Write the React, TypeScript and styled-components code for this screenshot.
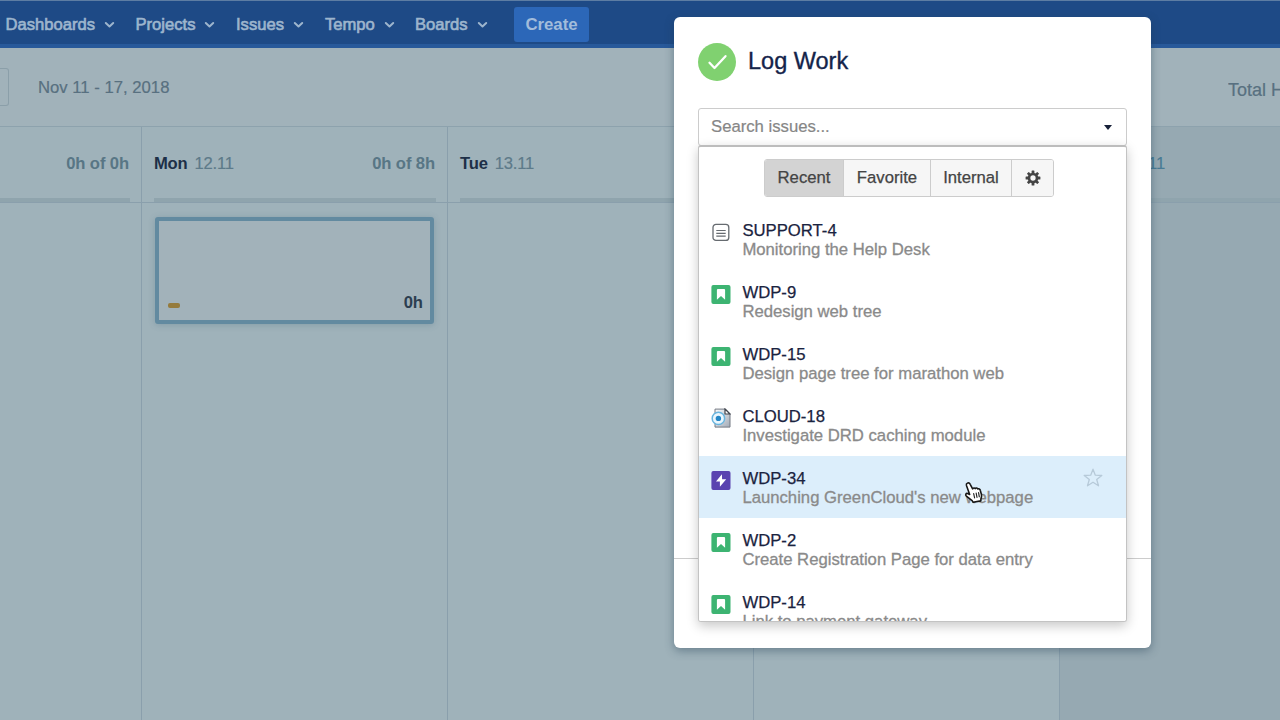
import React from "react";
import styled, { createGlobalStyle, css } from "styled-components";

const GlobalStyle = createGlobalStyle`
  * { box-sizing: border-box; }
  body { margin: 0; overflow: hidden; }
  body, button { font-family: "Liberation Sans", Arial, sans-serif; }
`;

const Page = styled.div`
  position: relative;
  width: 1280px;
  height: 720px;
  overflow: hidden;
  display: flex;
  flex-direction: column;
  background: #9fb2ba;
`;

const Nav = styled.nav`
  height: 48px;
  flex: none;
  display: flex;
  align-items: center;
  padding-left: 5.5px;
  background: #1e4a86;
  border-top: 1px solid #5d7da3;
  border-bottom: 4px solid #28599a;
`;

const NavItem = styled.a<{ $w: number }>`
  width: ${(p) => p.$w}px;
  flex: none;
  display: flex;
  align-items: center;
  gap: 9px;
  margin-top: 4px;
  font-size: 16.6px;
  color: #9db5cd;
  -webkit-text-stroke: 0.65px #9db5cd;
`;

const CreateButton = styled.button`
  width: 75px;
  height: 35px;
  margin-top: 4px;
  padding: 0;
  border: 0;
  border-radius: 3px;
  background: #2c67b8;
  color: #a2bcdb;
  font-size: 16.8px;
  font-weight: 700;
`;

const SubHeader = styled.header`
  height: 79px;
  flex: none;
  display: flex;
  align-items: center;
  background: #a1b2ba;
  border-bottom: 1px solid #8da2ad;
  color: #587080;
  font-size: 16.7px;
  -webkit-text-stroke: 0.2px #587080;
`;

const CutButton = styled.div`
  width: 9px;
  height: 38px;
  border: 1px solid #8b9fa9;
  border-left: 0;
  border-radius: 0 3px 3px 0;
`;

const DateRange = styled.div`
  margin: 1px 0 0 29px;
`;

const Total = styled.div`
  width: 52px;
  margin-left: auto;
  margin-top: 7px;
  overflow: hidden;
  white-space: nowrap;
  font-size: 18px;
`;

const Board = styled.main`
  flex: 1;
  display: flex;
`;

const Column = styled.section<{ $w: number; $today?: boolean }>`
  width: ${(p) => p.$w}px;
  flex: none;
  overflow: hidden;
  border-right: 1px solid #8a9fac;
  background: ${(p) => (p.$today ? "#96a9b2" : "#9fb2ba")};
`;

const DayHead = styled.div<{ $first?: boolean }>`
  height: 75px;
  margin: 0 11px 0 ${(p) => (p.$first ? 0 : 12)}px;
  padding: 2px 1px 0 0;
  display: flex;
  align-items: center;
  justify-content: ${(p) => (p.$first ? "flex-end" : "space-between")};
  border-bottom: 4px solid #8fa4ad;
  white-space: nowrap;
  font-size: 16.6px;
  letter-spacing: -0.1px;
`;

const HeadLine = styled.div`
  height: 1px;
  background: #8a9fac;
`;

const Day = styled.span<{ $today?: boolean }>`
  color: ${(p) => (p.$today ? "#497b95" : "#5d7a89")};
  letter-spacing: -0.2px;
  -webkit-text-stroke: 0.2px currentColor;
  b {
    margin-right: 7px;
    color: ${(p) => (p.$today ? "#497b95" : "#1d2f47")};
    -webkit-text-stroke: 0;
  }
`;

const Hours = styled.b`
  color: #587685;
`;

const DayCard = styled.div`
  height: 107px;
  margin: 14px 13px 0;
  padding: 0 7px 7px 9px;
  display: flex;
  align-items: flex-end;
  justify-content: space-between;
  background: #a2b2ba;
  border: 4px solid #628aa0;
  border-radius: 3px;
  box-shadow: 0 1px 6px rgba(70, 105, 125, 0.3);
  font-size: 16.6px;
  font-weight: 700;
  color: #2c3e50;
`;

const Dash = styled.i`
  width: 12px;
  height: 5px;
  margin-bottom: 5px;
  border-radius: 2px;
  background: #957b3d;
`;

const Modal = styled.div`
  position: absolute;
  left: 674px;
  top: 17px;
  width: 477px;
  height: 631px;
  display: flex;
  flex-direction: column;
  border-radius: 6px;
  background: #fff;
  box-shadow: 0 3px 10px rgba(30, 60, 80, 0.42);
`;

const ModalBody = styled.div`
  height: 542px;
  padding: 26px 24px 0;
  border-bottom: 1px solid #ccc;
`;

const TitleRow = styled.div`
  height: 38px;
  display: flex;
  align-items: center;
  gap: 12px;
`;

const Title = styled.h1`
  margin: -1px 0 0;
  font-size: 23.5px;
  font-weight: 400;
  color: #14244a;
  -webkit-text-stroke: 0.35px #14244a;
`;

const Picker = styled.div`
  position: relative;
  margin-top: 27px;
`;

const SearchField = styled.div`
  height: 38px;
  padding: 0 14px 0 12px;
  display: flex;
  align-items: center;
  justify-content: space-between;
  border: 1px solid #ccc;
  border-radius: 3px;
  background: #fff;
  font-size: 16.7px;
  color: #868686;
  -webkit-text-stroke: 0.2px #868686;
`;

const Caret = styled.i`
  margin-top: 1px;
  border: 4.5px solid transparent;
  border-top: 5px solid #172038;
  border-bottom: 0;
`;

const Dropdown = styled.div`
  position: absolute;
  left: 0;
  top: 37px;
  width: 429px;
  height: 477px;
  overflow: hidden;
  border: 1px solid #c3c3c3;
  border-top: 2px solid #bdbdbd;
  border-radius: 3px;
  background: #fff;
  box-shadow: 0 4px 12px rgba(0, 0, 0, 0.22);
`;

const Tabs = styled.div`
  width: 290px;
  height: 38px;
  margin: 12px 0 11px 65px;
  display: flex;
  border: 1px solid #ccc;
  border-radius: 3px;
  overflow: hidden;
`;

const Tab = styled.button<{ $w: number; $active?: boolean }>`
  width: ${(p) => p.$w}px;
  flex: none;
  display: flex;
  align-items: center;
  justify-content: center;
  padding: 0;
  border: 0;
  background: #f6f6f6;
  font-size: 16.7px;
  color: #444;
  -webkit-text-stroke: 0.25px #444;
  & + & {
    border-left: 1px solid #ccc;
  }
  ${(p) =>
    p.$active &&
    css`
      background: #d3d3d3;
    `}
`;

const IssueRow = styled.div<{ $hover?: boolean }>`
  height: 62px;
  padding: 13px 23px 0 12px;
  display: flex;
  background: ${(p) => (p.$hover ? "#dceefb" : "#fff")};
  svg {
    flex: none;
  }
  svg:first-child {
    margin-top: 1px;
  }
  svg:last-child {
    margin-top: -1px;
  }
`;

const IssueText = styled.div`
  flex: 1;
  margin-left: 11.4px;
  white-space: nowrap;
  font-size: 16.7px;
`;

const Key = styled.div`
  line-height: 20px;
  color: #1a2340;
  -webkit-text-stroke: 0.25px #1a2340;
`;

const Summary = styled.div`
  line-height: 18px;
  color: #8a8a8a;
  -webkit-text-stroke: 0.3px #8a8a8a;
`;

const Pointer = styled.svg`
  position: absolute;
  left: 964px;
  top: 481px;
`;

const Chevron = () => (
  <svg width="11" height="8" viewBox="0 0 11 8" fill="none">
    <path d="M1.8 2 5.5 5.5 9.2 2" stroke="#9db5cd" strokeWidth="2" strokeLinecap="round" strokeLinejoin="round" />
  </svg>
);

type Kind = "task" | "story" | "cloud" | "epic";

const IssueIcon = ({ kind }: { kind: Kind }) => {
  const common = { width: 20, height: 20, viewBox: "0 0 20 20" };
  if (kind === "task")
    return (
      <svg {...common} fill="none" stroke="#666b70">
        <rect x="2" y="2.4" width="15.8" height="16" rx="3" strokeWidth="1.3" />
        <path d="M5.3 8.5h9.4M5.3 11.3h9.4M5.3 14.1h9.4" strokeWidth="1.2" />
      </svg>
    );
  if (kind === "story")
    return (
      <svg {...common}>
        <rect x="0.4" y="0.9" width="19.1" height="19" rx="2" fill="#3db472" />
        <path d="M5.9 6a1 1 0 0 1 1-1h6.2a1 1 0 0 1 1 1v9.8L10 12l-4.1 3.8z" fill="#fff" />
      </svg>
    );
  if (kind === "epic")
    return (
      <svg {...common}>
        <rect x="0.4" y="0.9" width="19.1" height="19" rx="2" fill="#5a43b0" />
        <path d="M10.9 4.2 5 11.6h3.9v5.2l6.3-7.6h-4.1z" fill="#fff" />
      </svg>
    );
  return (
    <svg {...common}>
      <defs>
        <linearGradient id="sheet" x1="0" y1="0" x2="1" y2="1">
          <stop offset="0" stopColor="#fbfcfd" />
          <stop offset="1" stopColor="#a2aab6" />
        </linearGradient>
      </defs>
      <path d="M4 1.1h10.6L19 5.7v13.4H4z" fill="url(#sheet)" stroke="#747a84" strokeWidth="1" />
      <path d="M14 1v5h5z" fill="#fff" stroke="#3f434b" strokeWidth="1.2" />
      <circle cx="7.4" cy="10.4" r="6.2" fill="#eaf6fd" stroke="#69b5df" strokeWidth="1.5" />
      <circle cx="7.4" cy="10.4" r="2.7" fill="#2386c6" />
    </svg>
  );
};

const GearIcon = () => (
  <svg width="16" height="16" viewBox="-8 -8 16 16">
    <circle r="4" fill="none" stroke="#444" strokeWidth="2.7" />
    {[0, 45, 90, 135, 180, 225, 270, 315].map((a) => (
      <rect key={a} x="-1.4" y="-7.4" width="2.8" height="3" rx="0.5" fill="#444" transform={`rotate(${a})`} />
    ))}
  </svg>
);

const navItems: [string, number][] = [
  ["Dashboards", 130],
  ["Projects", 100.5],
  ["Issues", 89],
  ["Tempo", 90],
  ["Boards", 99],
];

const issues: [string, string, Kind][] = [
  ["SUPPORT-4", "Monitoring the Help Desk", "task"],
  ["WDP-9", "Redesign web tree", "story"],
  ["WDP-15", "Design page tree for marathon web", "story"],
  ["CLOUD-18", "Investigate DRD caching module", "cloud"],
  ["WDP-34", "Launching GreenCloud's new webpage", "epic"],
  ["WDP-2", "Create Registration Page for data entry", "story"],
  ["WDP-14", "Link to payment gateway", "story"],
];

export default function App() {
  return (
    <>
      <GlobalStyle />
      <Page>
        <Nav>
          {navItems.map(([label, w]) => (
            <NavItem key={label} $w={w}>
              {label}
              <Chevron />
            </NavItem>
          ))}
          <CreateButton>Create</CreateButton>
        </Nav>
        <SubHeader>
          <CutButton />
          <DateRange>Nov 11 - 17, 2018</DateRange>
          <Total>Total Hours</Total>
        </SubHeader>
        <Board>
          <Column $w={142}>
            <DayHead $first>
              <Hours>0h of 0h</Hours>
            </DayHead>
            <HeadLine />
          </Column>
          <Column $w={306}>
            <DayHead>
              <Day><b>Mon</b>12.11</Day>
              <Hours>0h of 8h</Hours>
            </DayHead>
            <HeadLine />
            <DayCard>
              <Dash />
              0h
            </DayCard>
          </Column>
          <Column $w={306}>
            <DayHead>
              <Day><b>Tue</b>13.11</Day>
            </DayHead>
            <HeadLine />
          </Column>
          <Column $w={306}>
            <DayHead />
            <HeadLine />
          </Column>
          <Column $w={306} $today>
            <DayHead>
              <Day $today><b>Today</b>15.11</Day>
            </DayHead>
            <HeadLine />
          </Column>
        </Board>

        <Modal>
          <ModalBody>
            <TitleRow>
              <svg width="38" height="38" viewBox="0 0 38 38" fill="none">
                <circle cx="19" cy="19" r="19" fill="#80d170" />
                <path d="M11.5 19.8 16.5 25 27.5 13.2" stroke="#fff" strokeWidth="2.3" strokeLinecap="round" strokeLinejoin="round" />
              </svg>
              <Title>Log Work</Title>
            </TitleRow>
            <Picker>
              <SearchField>
                Search issues...
                <Caret />
              </SearchField>
              <Dropdown>
                <Tabs>
                  <Tab $w={78} $active>Recent</Tab>
                  <Tab $w={87}>Favorite</Tab>
                  <Tab $w={81}>Internal</Tab>
                  <Tab $w={42}><GearIcon /></Tab>
                </Tabs>
                {issues.map(([key, summary, kind]) => (
                  <IssueRow key={key} $hover={key === "WDP-34"}>
                    <IssueIcon kind={kind} />
                    <IssueText>
                      <Key>{key}</Key>
                      <Summary>{summary}</Summary>
                    </IssueText>
                    {key === "WDP-34" && (
                      <svg width="20" height="20" viewBox="0 0 20 20" fill="none">
                        <path d="M10 1.2 12.3 7.2 18.8 7.5 13.7 11.5 15.5 17.8 10 14.2 4.5 17.8 6.3 11.5 1.2 7.5 7.7 7.2Z" stroke="#b7cad9" strokeWidth="1.3" strokeLinejoin="round" />
                      </svg>
                    )}
                  </IssueRow>
                ))}
              </Dropdown>
            </Picker>
          </ModalBody>
        </Modal>

        <Pointer width="21" height="23" viewBox="0 0 20 22">
          <path
            d="M3.2 2c1.1-.6 2.2.1 2.7 1.2l2.3 4.3c.4-1 2-1.1 2.5-.2.5-.9 2.1-.8 2.5.3.8-.5 2.1.1 2.3 1.2l1.2 4.3c.3 1.5-.1 2.7-.6 4.2v1.7l-7.4 1.4-1-1.7L2.2 14.4c-1.3-1.3-.3-3 1.3-2.4l1.9.9L2.3 4.3c-.3-.9-.1-1.8.9-2.3z"
            fill="#fff"
            stroke="#151515"
            strokeWidth="1.5"
            strokeLinejoin="round"
          />
          <path d="M9.2 12l.9 4.2M11.6 11.5l.8 4.2M13.9 11.1l.7 4" stroke="#222" strokeWidth="1.1" strokeLinecap="round" />
        </Pointer>
      </Page>
    </>
  );
}
